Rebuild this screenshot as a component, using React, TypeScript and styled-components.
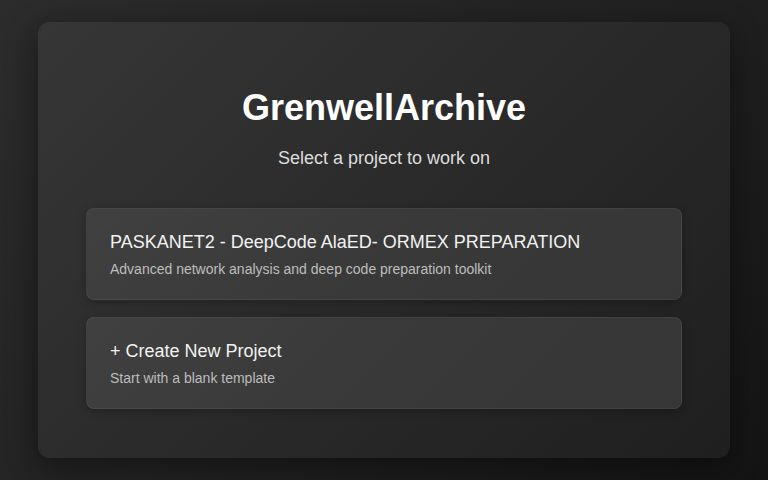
import { FC } from 'react';
import styled, { createGlobalStyle } from 'styled-components';

const GlobalStyle = createGlobalStyle`
  html, body {
    margin: 0;
    padding: 0;
    height: 100%;
  }
  body {
    font-family: 'Liberation Sans', Arial, sans-serif;
    background: linear-gradient(135deg, #2c2c2c 0%, #222222 50%, #141414 100%);
    color: #fff;
  }
  #root {
    height: 100%;
  }
`;

const Page = styled.div`
  height: 100%;
  display: flex;
  align-items: center;
  justify-content: center;
`;

const Panel = styled.div`
  width: 692px;
  height: 436px;
  box-sizing: border-box;
  padding: 65px 48px 48px;
  border-radius: 12px;
  background: linear-gradient(135deg, #363636 0%, #2a2a2a 50%, #1f1f1f 100%);
  box-shadow: 0 8px 32px rgba(0, 0, 0, 0.45);
  display: flex;
  flex-direction: column;
`;

const Title = styled.h1`
  margin: 0;
  font-size: 36px;
  font-weight: 700;
  line-height: 42px;
  text-align: center;
  color: #ffffff;
`;

const Subtitle = styled.p`
  margin: 19px 0 39px;
  font-size: 18px;
  line-height: 21px;
  text-align: center;
  color: #dddddd;
`;

const ProjectList = styled.div`
  display: flex;
  flex-direction: column;
  gap: 17px;
`;

const ProjectCard = styled.button`
  all: unset;
  box-sizing: border-box;
  height: 92px;
  padding: 23px;
  border-radius: 8px;
  border: 1px solid rgba(255, 255, 255, 0.05);
  background: linear-gradient(135deg, #404040 0%, #393939 50%, #363636 100%);
  box-shadow: 0 2px 8px rgba(0, 0, 0, 0.25);
  cursor: pointer;
  display: flex;
  flex-direction: column;
  gap: 8px;
  font-family: 'Liberation Sans', Arial, sans-serif;
`;

const ProjectName = styled.div`
  font-size: 18px;
  line-height: 21px;
  color: #f2f2f2;
`;

const ProjectDesc = styled.div`
  font-size: 14px;
  line-height: 16px;
  color: #bdbdbd;
`;

const projects = [
  {
    name: 'PASKANET2 - DeepCode AlaED- ORMEX PREPARATION',
    desc: 'Advanced network analysis and deep code preparation toolkit',
  },
  { name: '+ Create New Project', desc: 'Start with a blank template' },
];

const App: FC = () => {
  return (
    <>
      <GlobalStyle />
      <Page>
        <Panel>
          <Title>GrenwellArchive</Title>
          <Subtitle>Select a project to work on</Subtitle>
          <ProjectList>
            {projects.map((p) => (
              <ProjectCard key={p.name} type="button">
                <ProjectName>{p.name}</ProjectName>
                <ProjectDesc>{p.desc}</ProjectDesc>
              </ProjectCard>
            ))}
          </ProjectList>
        </Panel>
      </Page>
    </>
  );
};

export default App;
